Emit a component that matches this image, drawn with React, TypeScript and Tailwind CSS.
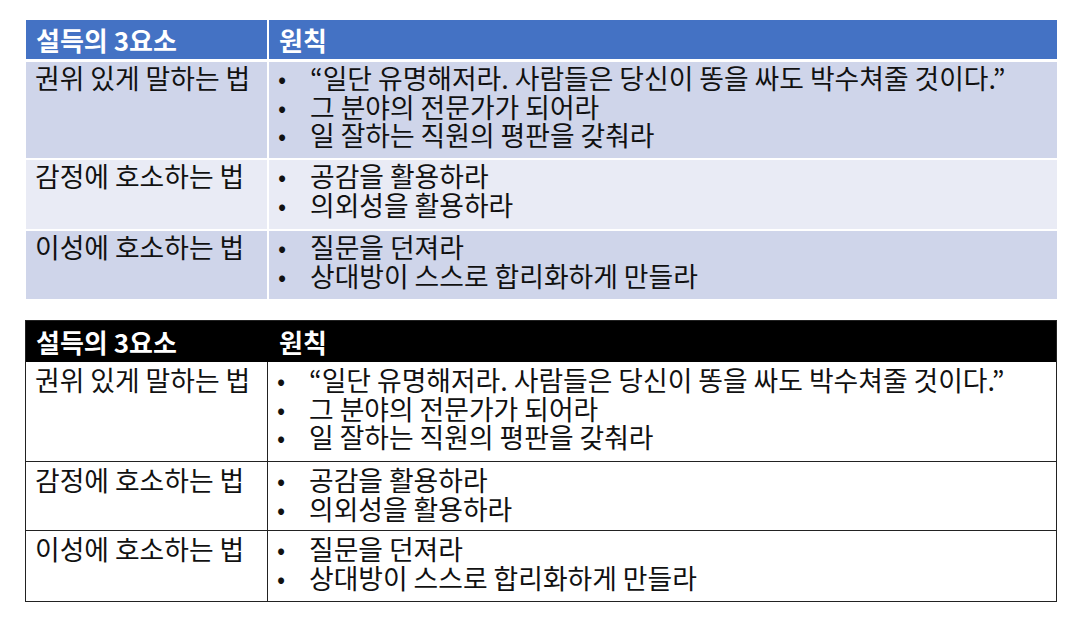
import React from "react";

type Row = { label: string; items: string[]; h1: string; h2: string };

const ROWS: Row[] = [
  {
    label: "권위 있게 말하는 법",
    items: [
      "“일단 유명해저라. 사람들은 당신이 똥을 싸도 박수쳐줄 것이다.”",
      "그 분야의 전문가가 되어라",
      "일 잘하는 직원의 평판을 갖춰라",
    ],
    h1: "h-[96px]",
    h2: "h-[100px]",
  },
  {
    label: "감정에 호소하는 법",
    items: ["공감을 활용하라", "의외성을 활용하라"],
    h1: "h-[69px]",
    h2: "h-[69px]",
  },
  {
    label: "이성에 호소하는 법",
    items: ["질문을 던져라", "상대방이 스스로 합리화하게 만들라"],
    h1: "h-[68px]",
    h2: "h-[70px]",
  },
];

const FONT = "font-['Noto_Sans_CJK_KR',sans-serif]";

function Bullets({ items }: { items: string[] }) {
  return (
    <ul className="flex flex-col">
      {items.map((t) => (
        <li key={t} className="flex leading-[28.5px]">
          <span className="w-[41px] shrink-0 pl-[9px] text-[24px]">•</span>
          <span className="text-[26.8px]">{t}</span>
        </li>
      ))}
    </ul>
  );
}

function BlueTable() {
  return (
    <div className="flex w-[1031px] flex-col gap-[2px]">
      <div className="mb-[2px] grid h-[38px] grid-cols-[241px_1fr] gap-x-[2px] text-white">
        <div className="flex items-center bg-[#4472c4] pl-[10px] text-[26px] font-bold">설득의 3요소</div>
        <div className="flex items-center bg-[#4472c4] pl-[10px] text-[26px] font-bold">원칙</div>
      </div>
      {ROWS.map((r, i) => {
        const bg = i % 2 === 0 ? "bg-[#cfd5ea]" : "bg-[#e9ebf5]";
        return (
          <div key={r.label} className={`grid grid-cols-[241px_1fr] gap-x-[2px] ${r.h1}`}>
            <div className={`${bg} pl-[9px] pt-[2px] text-[26.8px] leading-[28.5px]`}>{r.label}</div>
            <div className={`${bg} pt-[2px]`}>
              <Bullets items={r.items} />
            </div>
          </div>
        );
      })}
    </div>
  );
}

function BlackTable() {
  return (
    <div className="flex w-[1032px] flex-col border-[1.5px] border-[#222]">
      <div className="grid h-[41px] grid-cols-[242px_1fr] bg-black text-white">
        <div className="flex items-center pl-[10px] text-[26px] font-bold">설득의 3요소</div>
        <div className="flex items-center pl-[11px] text-[26px] font-bold">원칙</div>
      </div>
      {ROWS.map((r, i) => (
        <div
          key={r.label}
          className={`grid grid-cols-[242px_1fr] ${r.h2} ${i < ROWS.length - 1 ? "border-b-[1.5px] border-[#222]" : ""}`}
        >
          <div className="border-r-[1.5px] border-[#222] pl-[9px] pt-[4px] text-[26.8px] leading-[28.5px]">
            {r.label}
          </div>
          <div className="pt-[4px]">
            <Bullets items={r.items} />
          </div>
        </div>
      ))}
    </div>
  );
}

export default function App() {
  return (
    <div className={`h-[627px] w-[1081px] bg-white pl-[26px] pt-[20px] text-[#111] ${FONT}`}>
      <BlueTable />
      <div className="h-[21px]" />
      <div className="-ml-[1px]">
        <BlackTable />
      </div>
    </div>
  );
}
